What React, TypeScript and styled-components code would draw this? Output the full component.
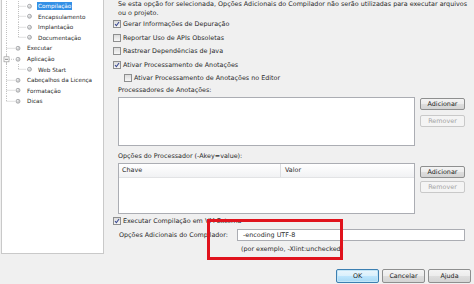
import styled, { createGlobalStyle } from "styled-components";

const GlobalStyle = createGlobalStyle`
  *, *::before, *::after { box-sizing: border-box; }
  html, body { margin: 0; padding: 0; background: #f0f0f0; }
  body { font-family: "DejaVu Sans", "Liberation Sans", sans-serif; }
`;

const Page = styled.div`
  position: relative;
  width: 474px;
  height: 284px;
  overflow: hidden;
  background: #f0f0f0;
  color: #2a2a2a;
  font-size: 6.4px;
  display: flex;
  flex-direction: column;
`;

const Main = styled.div`
  display: flex;
  height: 254px;
  flex-shrink: 0;
`;

const Tree = styled.div`
  width: 103px;
  margin-left: 1px;
  background: #fff;
  border: 1px solid #c9c9c9;
  border-top: none;
  padding-top: 0.7px;
  font-size: 5.7px;
`;

const TreeRow = styled.div`
  display: flex;
  align-items: center;
  height: 10.6px;
  white-space: nowrap;
`;

const TreeLabel = styled.span<{ $selected?: boolean }>`
  padding: 0 1px;
  line-height: 8px;
  background: ${({ $selected }) => ($selected ? "#3390e6" : "transparent")};
  color: ${({ $selected }) => ($selected ? "#fff" : "#2a2a2a")};
`;

const Content = styled.div`
  flex: 1;
  padding-left: 9px;
  display: flex;
  flex-direction: column;
  white-space: nowrap;
`;

const Description = styled.div`
  padding-left: 5px;
  line-height: 9px;
  margin-top: -0.5px;
`;

const CheckRow = styled.div<{ $indent?: number; $top?: number }>`
  display: flex;
  align-items: center;
  gap: 2px;
  height: 13.7px;
  padding-left: ${({ $indent }) => $indent ?? 0}px;
  margin-top: ${({ $top }) => $top ?? 0}px;
`;

const CheckBox = styled.span`
  display: inline-flex;
  align-items: center;
  justify-content: center;
  width: 8px;
  height: 8px;
  border: 1px solid #8e8f8f;
  background: linear-gradient(#dcdcdc, #f6f6f6);
`;

const SectionLabel = styled.div<{ $top?: number }>`
  padding-left: 5px;
  height: 10px;
  line-height: 10px;
  margin-top: ${({ $top }) => $top ?? 0}px;
`;

const ListRow = styled.div<{ $top?: number }>`
  display: flex;
  gap: 5px;
  padding-left: 5px;
  margin-top: ${({ $top }) => $top ?? 0}px;
`;

const ListBox = styled.div<{ $height: number }>`
  width: 297px;
  height: ${({ $height }) => $height}px;
  background: #fff;
  border: 1px solid #abadb3;
`;

const ButtonColumn = styled.div<{ $top: number; $gap: number }>`
  display: flex;
  flex-direction: column;
  gap: ${({ $gap }) => $gap}px;
  padding-top: ${({ $top }) => $top}px;
`;

const SideButton = styled.button`
  width: 45px;
  height: 12px;
  padding: 0;
  font: inherit;
  color: #1e1e1e;
  border: 1px solid #8e8f8f;
  border-radius: 2px;
  background: linear-gradient(#f4f4f4, #ececec 50%, #dedede 50%, #d4d4d4);

  &:disabled {
    color: #a3a3a3;
    border-color: #c9c9c9;
    background: #f4f4f4;
  }
`;

const TableHeader = styled.div`
  display: flex;
  height: 14px;
  background: linear-gradient(#ffffff, #f1f2f4);
  border-bottom: 1px solid #e2e3e5;
`;

const HeaderCell = styled.div<{ $width?: number }>`
  display: flex;
  align-items: center;
  width: ${({ $width }) => ($width ? `${$width}px` : "auto")};
  flex: ${({ $width }) => ($width ? "none" : 1)};
  border-right: ${({ $width }) => ($width ? "1px solid #dcdde0" : "none")};
  padding-left: ${({ $width }) => ($width ? 3 : 4)}px;
`;

const OptionsRow = styled.div`
  display: flex;
  align-items: center;
  height: 13px;
  padding-left: 6px;
`;

const FieldLabel = styled.span`
  width: 118px;
`;

const Field = styled.div`
  width: 228px;
  height: 12px;
  line-height: 10px;
  padding-left: 5px;
  background: #fff;
  border: 1px solid #abadb3;
`;

const Hint = styled.div`
  padding-left: 128px;
  line-height: 9px;
  margin-top: 4px;
`;

const BottomBar = styled.div`
  display: flex;
  justify-content: flex-end;
  align-items: flex-start;
  gap: 3px;
  height: 30px;
  padding: 15px 3px 0 0;
`;

const DialogButton = styled.button<{ $primary?: boolean }>`
  width: 43px;
  height: 14px;
  padding: 0;
  font: inherit;
  color: #1e1e1e;
  border: 1px solid ${({ $primary }) => ($primary ? "#3c7fb1" : "#8e8f8f")};
  border-radius: 2px;
  background: ${({ $primary }) =>
    $primary
      ? "linear-gradient(#eaf6fd, #d9f0fc 50%, #bee6fd 50%, #a7d9f5)"
      : "linear-gradient(#f4f4f4, #ececec 50%, #dedede 50%, #d4d4d4)"};
  box-shadow: ${({ $primary }) => ($primary ? "inset 0 0 0 1px #c4e5f6" : "none")};
`;

const Annotation = styled.div`
  position: absolute;
  left: 207px;
  top: 219px;
  width: 136px;
  height: 41px;
  border: 3px solid #e0131d;
  pointer-events: none;
`;

type Node = {
  label: string;
  level: 0 | 1;
  last?: boolean;
  selected?: boolean;
  expander?: boolean;
};

const nodes: Node[] = [
  { label: "Compilação", level: 1, selected: true },
  { label: "Encapsulamento", level: 1 },
  { label: "Implantação", level: 1 },
  { label: "Documentação", level: 1, last: true },
  { label: "Executar", level: 0 },
  { label: "Aplicação", level: 0, expander: true },
  { label: "Web Start", level: 1, last: true },
  { label: "Cabeçalhos da Licença", level: 0 },
  { label: "Formatação", level: 0 },
  { label: "Dicas", level: 0, last: true },
];

const LINE = "#b4b4b4";

// tree guide lines + bullet for one row
const Guides = ({ node }: { node: Node }) => {
  const w = node.level === 0 ? 24 : 35;
  const h = 10.6;
  const mid = h / 2;
  const own = node.level === 0 ? 4 : 16;
  const bullet = node.level === 0 ? 16 : 27.5;
  return (
    <svg width={w} height={h} style={{ flex: "none", overflow: "visible" }}>
      {node.level === 1 && <line x1={4.5} y1={0} x2={4.5} y2={h} stroke={LINE} strokeWidth={0.8} strokeDasharray="1 1" />}
      {node.expander ? (
        <>
          <line x1={own + 0.5} y1={0} x2={own + 0.5} y2={mid - 2.5} stroke={LINE} strokeWidth={0.8} />
          <line x1={own + 0.5} y1={mid + 2.5} x2={own + 0.5} y2={h} stroke={LINE} strokeWidth={0.8} />
          <rect x={own - 2} y={mid - 2.5} width={5} height={5} fill="#fff" stroke="#9a9a9a" strokeWidth={0.7} />
          <line x1={own - 1} y1={mid} x2={own + 2} y2={mid} stroke="#555" strokeWidth={0.7} />
          <line x1={own + 3} y1={mid} x2={bullet - 3} y2={mid} stroke={LINE} strokeWidth={0.8} strokeDasharray="1 1" />
        </>
      ) : (
        <>
          <line x1={own + 0.5} y1={0} x2={own + 0.5} y2={node.last ? mid : h} stroke={LINE} strokeWidth={0.8} strokeDasharray="1 1" />
          <line x1={own + 0.5} y1={mid} x2={bullet - 3} y2={mid} stroke={LINE} strokeWidth={0.8} strokeDasharray="1 1" />
        </>
      )}
      <circle cx={bullet} cy={mid} r={2} fill="#cfd0d2" stroke="#8b8d90" strokeWidth={0.6} />
      <circle cx={bullet - 0.5} cy={mid - 0.6} r={0.8} fill="#f4f4f4" />
    </svg>
  );
};

const Check = ({ checked }: { checked?: boolean }) => (
  <CheckBox>
    {checked && (
      <svg width={6} height={6} viewBox="0 0 6 6">
        <path d="M1 3.2 L2.4 4.7 L5 1" fill="none" stroke="#3b4b93" strokeWidth={1.1} />
      </svg>
    )}
  </CheckBox>
);

const options = [
  { label: "Gerar Informações de Depuração", checked: true },
  { label: "Reportar Uso de APIs Obsoletas" },
  { label: "Rastrear Dependências de Java" },
  { label: "Ativar Processamento de Anotações", checked: true },
];

export default function App() {
  return (
    <Page>
      <GlobalStyle />
      <Main>
        <Tree>
          {nodes.map((node) => (
            <TreeRow key={node.label}>
              <Guides node={node} />
              <TreeLabel $selected={node.selected}>{node.label}</TreeLabel>
            </TreeRow>
          ))}
        </Tree>
        <Content>
          <Description>
            Se esta opção for selecionada, Opções Adicionais do Compilador não serão utilizadas para executar arquivos
            <br />
            ou o projeto.
          </Description>
          {options.map((o) => (
            <CheckRow key={o.label}>
              <Check checked={o.checked} />
              <span>{o.label}</span>
            </CheckRow>
          ))}
          <CheckRow $indent={11}>
            <Check />
            <span>Ativar Processamento de Anotações no Editor</span>
          </CheckRow>
          <SectionLabel>Processadores de Anotações:</SectionLabel>
          <ListRow $top={2}>
            <ListBox $height={49} />
            <ButtonColumn $top={1} $gap={5}>
              <SideButton>Adicionar</SideButton>
              <SideButton disabled>Remover</SideButton>
            </ButtonColumn>
          </ListRow>
          <SectionLabel $top={5}>Opções do Processador (-Akey=value):</SectionLabel>
          <ListRow $top={2}>
            <ListBox $height={51}>
              <TableHeader>
                <HeaderCell $width={162}>Chave</HeaderCell>
                <HeaderCell>Valor</HeaderCell>
              </TableHeader>
            </ListBox>
            <ButtonColumn $top={3} $gap={3}>
              <SideButton>Adicionar</SideButton>
              <SideButton disabled>Remover</SideButton>
            </ButtonColumn>
          </ListRow>
          <CheckRow $top={1}>
            <Check checked />
            <span>Executar Compilação em VM Externa</span>
          </CheckRow>
          <OptionsRow>
            <FieldLabel>Opções Adicionais do Compilador:</FieldLabel>
            <Field>-encoding UTF-8</Field>
          </OptionsRow>
          <Hint>(por exemplo, -Xlint:unchecked)</Hint>
        </Content>
      </Main>
      <BottomBar>
        <DialogButton $primary>OK</DialogButton>
        <DialogButton>Cancelar</DialogButton>
        <DialogButton>Ajuda</DialogButton>
      </BottomBar>
      <Annotation />
    </Page>
  );
}
